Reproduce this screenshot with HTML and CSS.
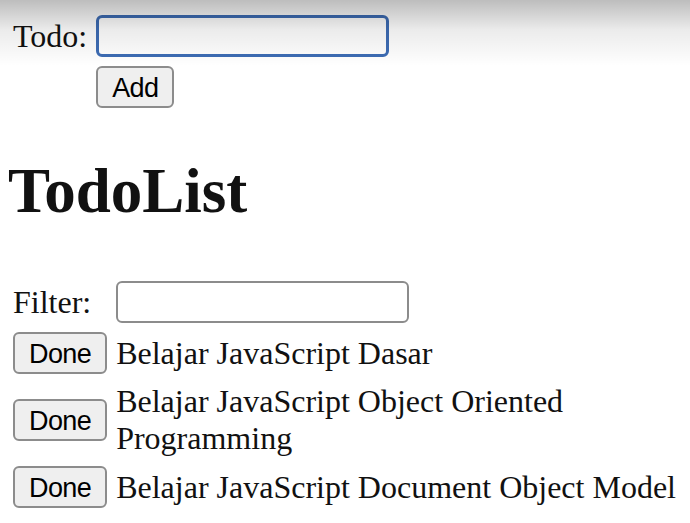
FILE: index.html
```html
<!DOCTYPE html>
<html lang="id">
<head>
<meta charset="utf-8">
<title>TodoList</title>
<link rel="stylesheet" href="styles.css">
</head>
<body>
<div class="topshade"></div>
<form class="todo-form">
  <table class="form-table">
    <tr>
      <td><label for="todo">Todo:</label></td>
      <td><input id="todo" class="field focused" type="text"></td>
    </tr>
    <tr>
      <td></td>
      <td><button type="button" class="btn">Add</button></td>
    </tr>
  </table>
</form>
<h1 class="title">TodoList</h1>
<table class="list-table">
  <tr>
    <td>Filter:</td>
    <td><input class="field" type="text"></td>
  </tr>
  <tr>
    <td><button type="button" class="btn">Done</button></td>
    <td>Belajar JavaScript Dasar</td>
  </tr>
  <tr>
    <td><button type="button" class="btn">Done</button></td>
    <td>Belajar JavaScript Object Oriented Programming</td>
  </tr>
  <tr>
    <td><button type="button" class="btn">Done</button></td>
    <td>Belajar JavaScript Document Object Model</td>
  </tr>
</table>
</body>
</html>
```

FILE: styles.css
```css
html, body {
  background: #fff;
}
body {
  margin: 8px 0 8px 8px;
  font-family: "Liberation Serif", "Times New Roman", serif;
  font-size: 32px;
  color: #111;
}
.topshade {
  position: absolute;
  top: 0;
  left: 0;
  right: 0;
  height: 66px;
  pointer-events: none;
  background: linear-gradient(rgba(0,0,0,0.26), rgba(0,0,0,0.08) 45%, rgba(0,0,0,0));
}
.todo-form {
  margin: 0;
}
table {
  border-spacing: 5px;
  margin-left: -2px;
}
td {
  padding: 2px;
}
.field {
  box-sizing: border-box;
  width: 293px;
  height: 42px;
  margin: 0;
  display: block;
  border: 2px solid #8c8c8c;
  border-radius: 6px;
  background: #fff;
  font: 25px "Liberation Sans", Arial, sans-serif;
}
.field.focused {
  border: 3px solid #3d6cb4;
}
.btn {
  box-sizing: border-box;
  height: 42px;
  margin: 0;
  padding: 3px 14px 0;
  display: block;
  border: 2px solid #8c8c8c;
  border-radius: 6px;
  background: #efefef;
  color: #000;
  font: 27px "Liberation Sans", Arial, sans-serif;
  letter-spacing: -0.6px;
}
.title {
  font-size: 63px;
  font-weight: bold;
  margin: 40px 0 46px 0;
}
```
